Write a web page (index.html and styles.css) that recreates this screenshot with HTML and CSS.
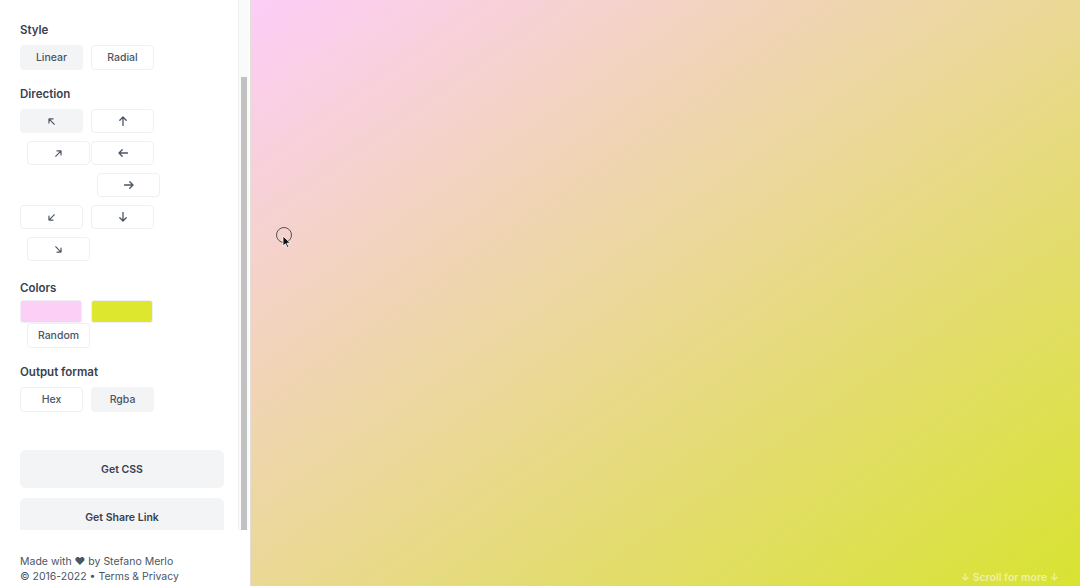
FILE: index.html
```
<!DOCTYPE html>
<html lang="en">
<head>
    <meta charset="UTF-8">
    <meta name="viewport" content="width=device-width, initial-scale=1.0">
    <title>Gradient Generator</title>
    <link rel="stylesheet" href="styles.css">
</head>
<body>
    <div class="page">
        <div class="sidebar">
            <div class="scroll-area">
                <div class="panel">
                    <h3 class="label">Style</h3>
                    <div class="btn-row">
                        <button class="opt active">Linear</button>
                        <button class="opt">Radial</button>
                    </div>

                    <h3 class="label">Direction</h3>
                    <div class="dir-grid">
                        <div class="btn-row">
                            <button class="opt active"><svg class="arrow diag r-315" viewBox="0 0 10 10"><path d="M5 9.5V1M1.8 4.2L5 1L8.2 4.2"/></svg></button>
                            <button class="opt"><svg class="arrow" viewBox="0 0 10 10"><path d="M5 9.5V1M1.8 4.2L5 1L8.2 4.2"/></svg></button>
                        </div>
                        <div class="btn-row tight shift-1">
                            <button class="opt"><svg class="arrow diag r-45" viewBox="0 0 10 10"><path d="M5 9.5V1M1.8 4.2L5 1L8.2 4.2"/></svg></button>
                            <button class="opt"><svg class="arrow r-270" viewBox="0 0 10 10"><path d="M5 9.5V1M1.8 4.2L5 1L8.2 4.2"/></svg></button>
                        </div>
                        <div class="btn-row shift-2">
                            <button class="opt"><svg class="arrow r-90" viewBox="0 0 10 10"><path d="M5 9.5V1M1.8 4.2L5 1L8.2 4.2"/></svg></button>
                        </div>
                        <div class="btn-row">
                            <button class="opt"><svg class="arrow diag r-225" viewBox="0 0 10 10"><path d="M5 9.5V1M1.8 4.2L5 1L8.2 4.2"/></svg></button>
                            <button class="opt"><svg class="arrow r-180" viewBox="0 0 10 10"><path d="M5 9.5V1M1.8 4.2L5 1L8.2 4.2"/></svg></button>
                        </div>
                        <div class="btn-row shift-1">
                            <button class="opt"><svg class="arrow diag r-135" viewBox="0 0 10 10"><path d="M5 9.5V1M1.8 4.2L5 1L8.2 4.2"/></svg></button>
                        </div>
                    </div>

                    <h3 class="label">Colors</h3>
                    <div class="btn-row swatches">
                        <span class="swatch pink"></span>
                        <span class="swatch lime"></span>
                    </div>
                    <div class="btn-row shift-1">
                        <button class="opt">Random</button>
                    </div>

                    <h3 class="label">Output format</h3>
                    <div class="btn-row">
                        <button class="opt">Hex</button>
                        <button class="opt active">Rgba</button>
                    </div>

                    <button class="big-btn first">Get CSS</button>
                    <button class="big-btn">Get Share Link</button>
                </div>
                <div class="scrollbar">
                    <div class="thumb"></div>
                </div>
            </div>
            <div class="footer">
                <div>Made with &#10084; by Stefano Merlo</div>
                <div>&copy; 2016-2022 &bull; Terms &amp; Privacy</div>
            </div>
        </div>
        <div class="preview">
            <svg class="cursor" width="24" height="28" viewBox="0 0 24 28">
                <circle cx="9" cy="9" r="7.5" fill="none" stroke="#555" stroke-width="1"/>
                <path d="M8 10 L8 20 L10.5 17.8 L12.3 21.5 L13.8 20.8 L12 17.2 L15.2 17 Z" fill="#111" stroke="#fff" stroke-width="0.8"/>
            </svg>
            <div class="scroll-hint">&#8595; Scroll for more &#8595;</div>
        </div>
    </div>
</body>
</html>
```

FILE: styles.css
```
* {
    box-sizing: border-box;
}

body {
    margin: 0;
    font-family: "Inter", "Noto Sans", sans-serif;
    color: #374151;
    background: #fff;
}

.page {
    display: flex;
    width: 1080px;
    height: 586px;
    overflow: hidden;
}

.sidebar {
    width: 251px;
    flex: none;
    display: flex;
    flex-direction: column;
    background: #fff;
    border-right: 1px solid #e2ddd5;
}

.scroll-area {
    display: flex;
    height: 530px;
    overflow: hidden;
}

.panel {
    width: 239px;
    padding: 22px 14px 0 20px;
    border-right: 1px solid #f1f1f1;
}

.label {
    margin: 16px 0 7px;
    font-size: 11.5px;
    line-height: 16px;
    font-weight: 600;
    color: #374151;
}

.label:first-child {
    margin-top: 0;
}

.dir-grid + .label {
    margin-top: 19px;
}

.btn-row {
    display: flex;
    gap: 8px;
}

.dir-grid {
    display: flex;
    flex-direction: column;
    gap: 8px;
}

.tight {
    gap: 1px;
}

.shift-1 {
    padding-left: 7px;
}

.shift-2 {
    padding-left: 77px;
}

.opt {
    display: flex;
    align-items: center;
    justify-content: center;
    width: 63px;
    height: 25px;
    margin: 0;
    padding: 0;
    border: 1px solid #eef0f3;
    border-radius: 4px;
    background: #fff;
    font-family: inherit;
    font-size: 10.5px;
    font-weight: 500;
    color: #4b5563;
}

.dir-grid .opt {
    height: 24px;
}

.arrow {
    width: 10px;
    height: 10px;
    fill: none;
    stroke: #4b5563;
    stroke-width: 1.3;
    stroke-linecap: round;
    stroke-linejoin: round;
}

.arrow.diag {
    width: 9px;
    height: 9px;
}

.r-45 { transform: rotate(45deg); }
.r-90 { transform: rotate(90deg); }
.r-135 { transform: rotate(135deg); }
.r-180 { transform: rotate(180deg); }
.r-225 { transform: rotate(225deg); }
.r-270 { transform: rotate(270deg); }
.r-315 { transform: rotate(315deg); }

.opt.active {
    background: #f3f4f6;
    border-color: #f3f4f6;
}

.swatches {
    margin-top: -3px;
    gap: 9px;
}

.swatch {
    width: 62px;
    height: 23px;
    border-radius: 3px;
    border: 1px solid #eef0f3;
}

.pink {
    background: #fcd0f6;
}

.lime {
    background: #dce72d;
}

.big-btn {
    display: block;
    width: 204px;
    height: 38px;
    margin: 10px 0 0;
    border: none;
    border-radius: 6px;
    background: #f3f4f6;
    font-family: inherit;
    font-size: 10.5px;
    font-weight: 600;
    color: #374151;
}

.big-btn.first {
    margin-top: 38px;
}

.scrollbar {
    width: 10px;
    padding: 77px 2px 0 2px;
    background: #fafafa;
}

.thumb {
    width: 6px;
    height: 453px;
    background: #c1c1c1;
}

.footer {
    padding: 24px 0 0 20px;
    font-size: 10.5px;
    line-height: 15px;
    color: #4b5563;
}

.preview {
    position: relative;
    flex: 1;
    background: linear-gradient(to bottom right, #fdcdf8, #d8e331);
}

.cursor {
    position: absolute;
    left: 24px;
    top: 226px;
}

.scroll-hint {
    position: absolute;
    right: 21px;
    bottom: 2px;
    font-size: 10.5px;
    font-weight: 600;
    color: rgba(255, 255, 255, 0.55);
}
```
